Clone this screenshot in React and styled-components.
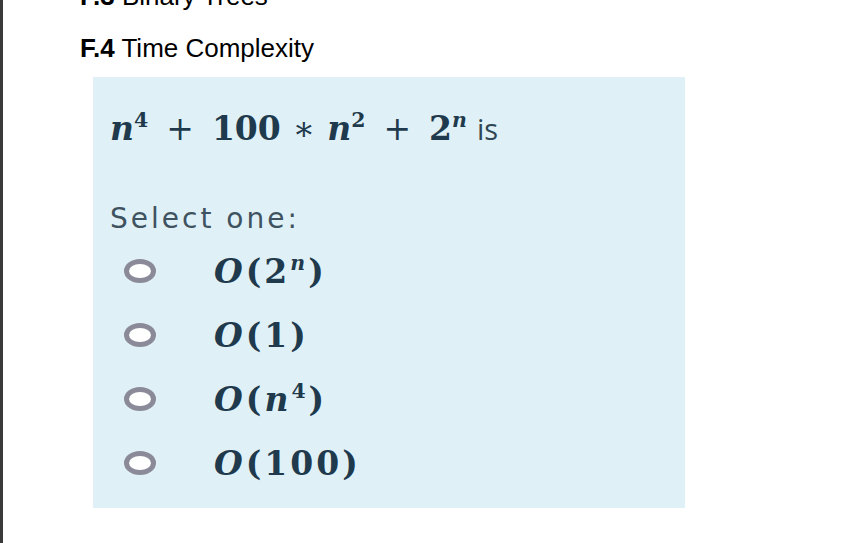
import React from 'react'
import styled, { createGlobalStyle } from 'styled-components'

const GlobalStyle = createGlobalStyle`
  html, body {
    margin: 0;
    padding: 0;
    background: #ffffff;
  }
  body {
    font-family: "Liberation Sans", Arial, sans-serif;
    overflow: hidden;
  }
`

const Page = styled.div`
  min-height: 100vh;
  border-left: 3px solid #3a3a3a;
  box-sizing: border-box;
  display: flex;
  flex-direction: column;
`

const Heading = styled.h3`
  margin: 0;
  padding-left: 77px;
  font-size: 26px;
  font-weight: normal;
  line-height: 52px;
  color: #000;
  &:first-child {
    margin-top: -30px;
  }
  b {
    font-weight: bold;
  }
`

const QuestionBox = styled.div`
  margin: 3px 0 0 90px;
  width: 592px;
  height: 431px;
  background: #dff1f7;
  padding: 32px 0 0 17px;
  box-sizing: border-box;
  display: flex;
  flex-direction: column;
  color: #1f3a4c;
`

const MathLine = styled.div`
  font-family: "DejaVu Serif", "Liberation Serif", serif;
  font-weight: bold;
  font-size: 33px;
  line-height: 40px;
  white-space: nowrap;
`

const Var = styled.i`
  font-style: italic;
`

const Sup = styled.sup`
  font-size: 0.62em;
  vertical-align: 0.62em;
  line-height: 0;
`

const Op = styled.span`
  font-weight: normal;
  margin: 0 ${p => p.$space || 18}px;
`

const Word = styled.span`
  font-family: "Open Sans", "DejaVu Sans", sans-serif;
  font-weight: normal;
  font-size: 29px;
  margin-left: 10px;
  color: #2f4654;
`

const Prompt = styled.div`
  margin-top: 50px;
  font-family: "DejaVu Sans", "Open Sans", sans-serif;
  font-size: 28px;
  letter-spacing: 3px;
  line-height: 40px;
  color: #3f5260;
`

const Options = styled.div`
  display: flex;
  flex-direction: column;
`

const Row = styled.label`
  display: flex;
  align-items: center;
  height: 64px;
  padding-left: 14px;
`

const Radio = styled.span`
  width: 32px;
  height: 24px;
  border: 5px solid #8b8a98;
  border-radius: 50%;
  background: #ffffff;
  box-sizing: border-box;
  flex: none;
  margin-right: 58px;
`

const Answer = styled.span`
  font-family: "DejaVu Serif", "Liberation Serif", serif;
  font-weight: bold;
  font-size: 33px;
  letter-spacing: 3px;
  white-space: nowrap;
`

const options = [
  <><Var>O</Var>(2<Sup><Var>n</Var></Sup>)</>,
  <><Var>O</Var>(1)</>,
  <><Var>O</Var>(<Var>n</Var><Sup>4</Sup>)</>,
  <><Var>O</Var>(100)</>,
]

export default function App() {
  return (
    <Page>
      <GlobalStyle />
      <Heading><b>F.3</b> Binary Trees</Heading>
      <Heading><b>F.4</b> Time Complexity</Heading>
      <QuestionBox>
        <MathLine>
          <Var>n</Var><Sup>4</Sup>
          <Op>+</Op>
          100
          <Op $space={12}>∗</Op>
          <Var>n</Var><Sup>2</Sup>
          <Op>+</Op>
          2<Sup><Var>n</Var></Sup>
          <Word>is</Word>
        </MathLine>
        <Prompt>Select one:</Prompt>
        <Options>
          {options.map((o, i) => (
            <Row key={i}>
              <Radio />
              <Answer>{o}</Answer>
            </Row>
          ))}
        </Options>
      </QuestionBox>
    </Page>
  )
}
